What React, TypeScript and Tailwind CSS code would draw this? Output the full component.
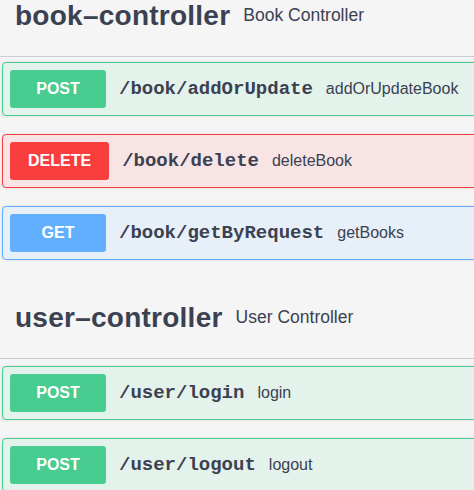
import React from "react";

type Method = "POST" | "DELETE" | "GET";

const styles: Record<Method, { block: string; badge: string }> = {
  POST: { block: "border-[#49cc90] bg-[#e4f2ec]", badge: "bg-[#49cc90]" },
  DELETE: { block: "border-[#f93e3e] bg-[#f8e4e4]", badge: "bg-[#f93e3e]" },
  GET: { block: "border-[#61affe] bg-[#e7eff8]", badge: "bg-[#61affe]" },
};

const Op: React.FC<{ method: Method; path: string; summary: string }> = ({ method, path, summary }) => {
  const s = styles[method];
  return (
    <div
      className={`ml-[2px] w-[490px] h-[54px] flex items-center gap-[13px] border rounded-[4px] px-[7px] shadow-[0_0_3px_rgba(0,0,0,0.12)] ${s.block}`}
    >
      <span
        className={`h-[38px] min-w-[96px] px-[18px] flex items-center justify-center rounded-[3px] text-white text-[16px] font-bold ${s.badge}`}
      >
        {method}
      </span>
      <span className="font-['Liberation_Mono',monospace] font-bold text-[19px] text-[#3b4151]">{path}</span>
      <span className="text-[16px] text-[#3b4151]">{summary}</span>
    </div>
  );
};

const Tag: React.FC<{ name: string; desc: string }> = ({ name, desc }) => (
  <div className="h-[57px] flex items-start gap-[13px] pl-[15px] border-b border-[#cbccd3]">
    <h3 className="pt-[2px] text-[28px] leading-[28px] font-bold tracking-[0.25px] text-[#3b4151]">{name}</h3>
    <span className="mt-[5px] text-[17.5px] leading-[20px] text-[#3b4151]">{desc}</span>
  </div>
);

export default function App() {
  return (
    <div className="w-[474px] h-[490px] overflow-hidden bg-[#f5f5f5] font-['Liberation_Sans',Arial,sans-serif]">
      <Tag name="book–controller" desc="Book Controller" />
      <div className="mt-[5px] flex flex-col gap-[18px]">
        <Op method="POST" path="/book/addOrUpdate" summary="addOrUpdateBook" />
        <Op method="DELETE" path="/book/delete" summary="deleteBook" />
        <Op method="GET" path="/book/getByRequest" summary="getBooks" />
      </div>
      <div className="mt-[42px]">
        <Tag name="user–controller" desc="User Controller" />
      </div>
      <div className="mt-[7px] flex flex-col gap-[18px]">
        <Op method="POST" path="/user/login" summary="login" />
        <Op method="POST" path="/user/logout" summary="logout" />
      </div>
    </div>
  );
}
